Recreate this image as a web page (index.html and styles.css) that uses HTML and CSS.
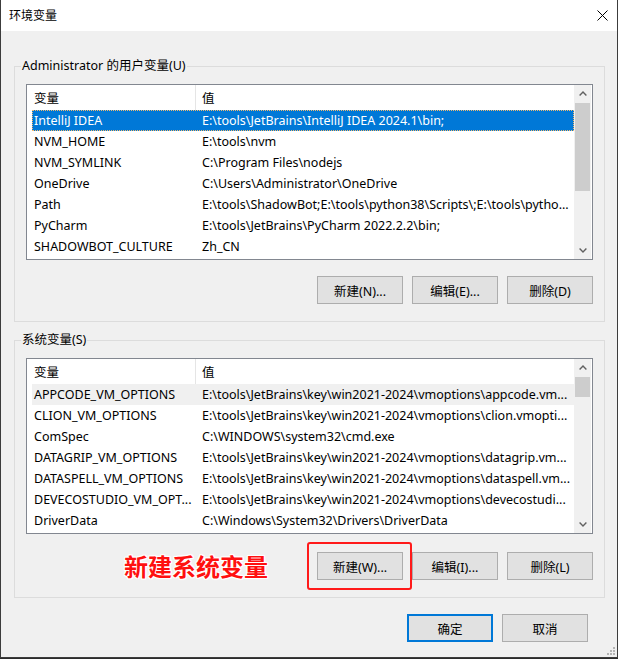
FILE: index.html
```html
<!DOCTYPE html>
<html lang="zh-CN">
<head>
<meta charset="utf-8">
<title>环境变量</title>
<link rel="stylesheet" href="styles.css">
</head>
<body>
<div class="window">
  <div class="titlebar">
    <span class="title">环境变量</span>
    <span class="close">
      <svg width="11" height="11" viewBox="0 0 11 11"><path d="M0.5 0.5L10.5 10.5M10.5 0.5L0.5 10.5" stroke="#000" stroke-width="1" fill="none"/></svg>
    </span>
  </div>
  <div class="content">
    <fieldset class="group">
      <legend>Administrator 的用户变量(U)</legend>
      <div class="list">
        <div class="list-main">
          <div class="list-head"><div class="col-name">变量</div><div class="col-val">值</div></div>
          <div class="row selected"><div class="col-name">IntelliJ IDEA</div><div class="col-val">E:\tools\JetBrains\IntelliJ IDEA 2024.1\bin;</div></div>
          <div class="row"><div class="col-name">NVM_HOME</div><div class="col-val">E:\tools\nvm</div></div>
          <div class="row"><div class="col-name">NVM_SYMLINK</div><div class="col-val">C:\Program Files\nodejs</div></div>
          <div class="row"><div class="col-name">OneDrive</div><div class="col-val">C:\Users\Administrator\OneDrive</div></div>
          <div class="row"><div class="col-name">Path</div><div class="col-val">E:\tools\ShadowBot;E:\tools\python38\Scripts\;E:\tools\pytho...</div></div>
          <div class="row"><div class="col-name">PyCharm</div><div class="col-val">E:\tools\JetBrains\PyCharm 2022.2.2\bin;</div></div>
          <div class="row"><div class="col-name">SHADOWBOT_CULTURE</div><div class="col-val">Zh_CN</div></div>
        </div>
        <div class="scrollbar">
          <div class="sb-btn"><svg width="8" height="5" viewBox="0 0 8 5"><polyline points="0.6,4.4 4,1 7.4,4.4" fill="none" stroke="#606060" stroke-width="1.4"/></svg></div>
          <div class="sb-track"><div class="sb-thumb" style="height:88px"></div></div>
          <div class="sb-btn"><svg width="8" height="5" viewBox="0 0 8 5"><polyline points="0.6,0.6 4,4 7.4,0.6" fill="none" stroke="#606060" stroke-width="1.4"/></svg></div>
        </div>
      </div>
      <div class="btn-row">
        <button class="btn">新建(N)...</button>
        <button class="btn">编辑(E)...</button>
        <button class="btn">删除(D)</button>
      </div>
    </fieldset>

    <fieldset class="group group-sys">
      <legend>系统变量(S)</legend>
      <div class="list">
        <div class="list-main">
          <div class="list-head"><div class="col-name">变量</div><div class="col-val">值</div></div>
          <div class="row hover"><div class="col-name">APPCODE_VM_OPTIONS</div><div class="col-val">E:\tools\JetBrains\key\win2021-2024\vmoptions\appcode.vm...</div></div>
          <div class="row"><div class="col-name">CLION_VM_OPTIONS</div><div class="col-val">E:\tools\JetBrains\key\win2021-2024\vmoptions\clion.vmopti...</div></div>
          <div class="row"><div class="col-name">ComSpec</div><div class="col-val">C:\WINDOWS\system32\cmd.exe</div></div>
          <div class="row"><div class="col-name">DATAGRIP_VM_OPTIONS</div><div class="col-val">E:\tools\JetBrains\key\win2021-2024\vmoptions\datagrip.vm...</div></div>
          <div class="row"><div class="col-name">DATASPELL_VM_OPTIONS</div><div class="col-val">E:\tools\JetBrains\key\win2021-2024\vmoptions\dataspell.vm...</div></div>
          <div class="row"><div class="col-name">DEVECOSTUDIO_VM_OPT...</div><div class="col-val">E:\tools\JetBrains\key\win2021-2024\vmoptions\devecostudi...</div></div>
          <div class="row"><div class="col-name">DriverData</div><div class="col-val">C:\Windows\System32\Drivers\DriverData</div></div>
        </div>
        <div class="scrollbar">
          <div class="sb-btn"><svg width="8" height="5" viewBox="0 0 8 5"><polyline points="0.6,4.4 4,1 7.4,4.4" fill="none" stroke="#606060" stroke-width="1.4"/></svg></div>
          <div class="sb-track"><div class="sb-thumb" style="height:20px"></div></div>
          <div class="sb-btn"><svg width="8" height="5" viewBox="0 0 8 5"><polyline points="0.6,0.6 4,4 7.4,0.6" fill="none" stroke="#606060" stroke-width="1.4"/></svg></div>
        </div>
      </div>
      <div class="btn-row">
        <button class="btn">新建(W)...</button>
        <button class="btn">编辑(I)...</button>
        <button class="btn">删除(L)</button>
      </div>
    </fieldset>

    <div class="dialog-btns">
      <button class="btn btn-default">确定</button>
      <button class="btn">取消</button>
    </div>
  </div>

  <div class="annot-text">新建系统变量</div>
  <div class="annot-box"></div>
  <svg class="grip" width="9" height="9" viewBox="0 0 9 9">
    <rect x="7" y="1" width="2" height="2" fill="#b4b4b4"/>
    <rect x="4" y="4" width="2" height="2" fill="#b4b4b4"/>
    <rect x="7" y="4" width="2" height="2" fill="#b4b4b4"/>
    <rect x="1" y="7" width="2" height="2" fill="#b4b4b4"/>
    <rect x="4" y="7" width="2" height="2" fill="#b4b4b4"/>
    <rect x="7" y="7" width="2" height="2" fill="#b4b4b4"/>
  </svg>
</div>
</body>
</html>
```

FILE: styles.css
```css
* { box-sizing: border-box; }
html, body { margin: 0; padding: 0; }
body {
  width: 618px;
  height: 659px;
  overflow: hidden;
  background: #2b2b2b;
  font-family: "Noto Sans", "Noto Sans CJK SC", sans-serif;
  font-size: 12.5px;
  color: #000;
}
.window {
  position: relative;
  width: 618px;
  height: 658px;
  background: #f0f0f0;
  border-left: 1px solid #3c3c3c;
  border-right: 1px solid #3c3c3c;
  border-bottom: 1px solid #3c3c3c;
}
.titlebar {
  height: 31px;
  background: #fff;
  display: flex;
  align-items: center;
  justify-content: space-between;
  padding: 0 9px 0 8px;
}
.title { font-size: 12px; line-height: 16px; }
.close { display: flex; width: 11px; height: 11px; }

.content {
  padding: 27px 12px 0 13px;
}
.group {
  margin: 0;
  border: 1px solid #dcdcdc;
  padding: 10px 11px 17px 11px;
  min-width: 0;
}
.group legend {
  padding: 0 1px;
  margin-left: -5px;
  line-height: 16px;
  font-size: 12.5px;
}
.group-sys { margin-top: 10px; }
.group-sys .btn-row { margin-top: 18px; }

.list {
  display: flex;
  height: 176px;
  border: 1px solid #828790;
  background: #fff;
  padding-right: 1px;
}
.list-main {
  flex: 1;
  min-width: 0;
  overflow: hidden;
}
.list-head {
  display: flex;
  height: 25px;
}
.list-head .col-name {
  width: 169px;
  padding-left: 7px;
  border-right: 1px solid #e5e5e5;
  display: flex;
  align-items: center;
}
.list-head .col-val {
  padding-left: 6px;
  display: flex;
  align-items: center;
}
.row {
  display: flex;
  align-items: center;
  height: 21px;
  margin-left: 5px;
  white-space: nowrap;
}
.row .col-name {
  width: 163px;
  flex: none;
  padding-left: 2px;
  overflow: hidden;
}
.row .col-val {
  flex: 1;
  min-width: 0;
  padding-left: 7px;
  overflow: hidden;
}
.row.selected {
  background: #0078d7;
  color: #fff;
  outline: 1px dotted #f3b96e;
  outline-offset: -1px;
}
.row.hover { background: #f0f0f0; }

.scrollbar {
  width: 17px;
  flex: none;
  display: flex;
  flex-direction: column;
  background: #f0f0f0;
}
.sb-btn {
  height: 17px;
  display: flex;
  align-items: center;
  justify-content: center;
}
.sb-track {
  flex: 1;
  padding: 1px 1px 0 1px;
}
.sb-thumb { background: #cdcdcd; }

.btn-row {
  display: flex;
  justify-content: flex-end;
  gap: 9px;
  margin-top: 16px;
}
.btn {
  width: 86px;
  height: 28px;
  padding: 0;
  background: #e1e1e1;
  border: 1px solid #adadad;
  font-family: inherit;
  font-size: 12.5px;
  color: #000;
}
.btn-default { border: 2px solid #0078d7; }

.dialog-btns {
  display: flex;
  justify-content: flex-end;
  gap: 9px;
  margin-top: 16px;
  padding-right: 17px;
}

.annot-text {
  position: absolute;
  left: 123px;
  top: 551px;
  font-family: "Noto Sans CJK SC", sans-serif;
  font-size: 24px;
  line-height: 30px;
  font-weight: 700;
  color: #ff1010;
  text-shadow: 1px 0 0 #fff, -1px 0 0 #fff, 0 1px 0 #fff, 0 -1px 0 #fff,
               1px 1px 0 #fff, -1px -1px 0 #fff, 1px -1px 0 #fff, -1px 1px 0 #fff,
               0 0 3px #fff;
}
.annot-box {
  position: absolute;
  left: 306px;
  top: 542px;
  width: 105px;
  height: 48px;
  border: 2px solid #ff1a1a;
  border-radius: 3px;
}
.grip {
  position: absolute;
  right: 2px;
  bottom: 2px;
}
```
